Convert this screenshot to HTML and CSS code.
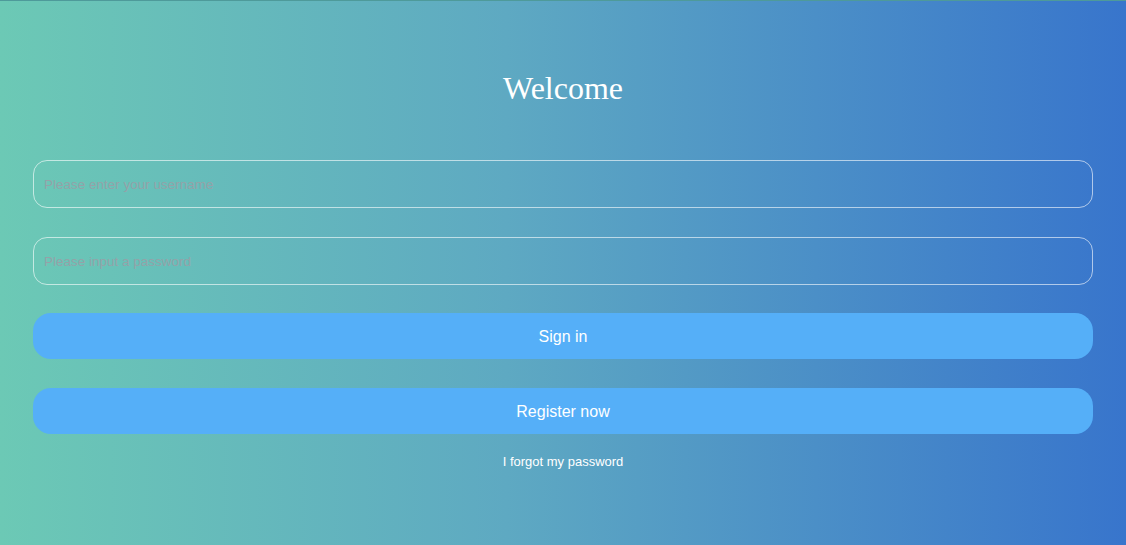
FILE: index.html
```html
<!DOCTYPE html>
<html>
<head>
  <title>Welcome</title>
  <link rel="stylesheet" href="styles.css">
</head>
<body>
  <div class="login-page">
    <h1 class="title">Welcome</h1>
    <form class="login-form" onsubmit="return false">
      <input type="text" class="field" placeholder="Please enter your username">
      <input type="password" class="field" placeholder="Please input a password">
      <button type="submit" class="btn">Sign in</button>
      <button type="button" class="btn">Register now</button>
      <a href="#" class="forgot">I forgot my password</a>
    </form>
  </div>
</body>
</html>
```

FILE: styles.css
```css
html, body {
  margin: 0;
  height: 100%;
}

body {
  background: linear-gradient(to right, #6cc9b5, #5ea9c2 45%, #3875cc);
  border-top: 1px solid #4e9a9a;
  box-sizing: border-box;
  font-family: "Liberation Sans", Arial, sans-serif;
}

.login-page {
  padding: 69px 33px 0;
}

/* Heading */
.title {
  margin: 0;
  font-family: "Liberation Serif", "Times New Roman", serif;
  font-weight: normal;
  font-size: 32px;
  line-height: 37px;
  color: #fff;
  text-align: center;
}

.login-form {
  display: flex;
  flex-direction: column;
  margin-top: 53px;
}

.field {
  height: 48px;
  box-sizing: border-box;
  padding: 0 10px;
  border: 1px solid rgba(255, 255, 255, 0.6);
  border-radius: 14px;
  background: transparent;
  font-family: "Liberation Sans", Arial, sans-serif;
  font-size: 13.5px;
  color: #fff;
  margin-bottom: 29px;
  outline: none;
}

.field::placeholder {
  color: #94a2a8;
}

.field + .field {
  margin-bottom: 28px;
}

/* Buttons */
.btn {
  height: 46px;
  padding-top: 2px;
  border: none;
  border-radius: 18px;
  background-color: #55aff8;
  color: #fff;
  font-family: "Liberation Sans", Arial, sans-serif;
  font-size: 16px;
  cursor: pointer;
  margin-bottom: 29px;
}

.btn + .btn {
  margin-bottom: 20px;
}

.forgot {
  align-self: center;
  color: #fff;
  font-size: 13px;
  text-decoration: none;
}
```
